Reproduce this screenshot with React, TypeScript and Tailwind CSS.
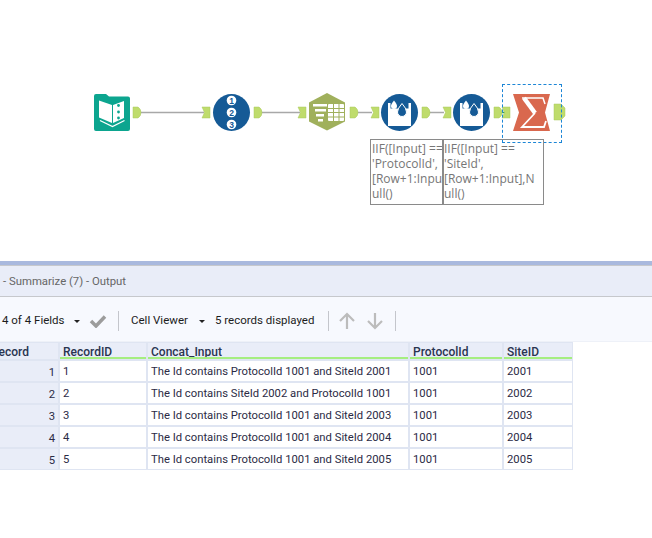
const rows = [
  ['1', 'The Id contains ProtocolId 1001 and SiteId 2001', '1001', '2001'],
  ['2', 'The Id contains SiteId 2002 and ProtocolId 1001', '1001', '2002'],
  ['3', 'The Id contains ProtocolId 1001 and SiteId 2003', '1001', '2003'],
  ['4', 'The Id contains ProtocolId 1001 and SiteId 2004', '1001', '2004'],
  ['5', 'The Id contains ProtocolId 1001 and SiteId 2005', '1001', '2005'],
]

const outAnchor = (x: number) => (
  <path d={`M${x} 107h5q3 2 3 5.5t-3 5.5h-5z`} fill="#bfdc6c" stroke="#a9c95c" strokeWidth="0.5" />
)
const inAnchor = (x: number) => (
  <path d={`M${x} 107h8v11h-8l2.5-5.5z`} fill="#bfdc6c" stroke="#a9c95c" strokeWidth="0.5" />
)

function FormulaIcon({ cx }: { cx: number }) {
  const x = cx - 18.5
  return (
    <g transform={`translate(${x} 94)`}>
      <circle cx="18.5" cy="18.5" r="18.5" fill="#155a96" />
      <path d="M7 9h2.5v5.5h18V9H30v23H7z" fill="#fff" />
      <path d="M13 6.5q3 3.5 3 5.5a3 3 0 0 1-6 0q0-2 3-5.5z" fill="#fff" />
      <path d="M21 9.5q4.5 5 4.5 8.5a4.5 4.5 0 0 1-9 0q0-3.5 4.5-8.5z" fill="#155a96" stroke="#fff" strokeWidth="1" />
    </g>
  )
}

function WorkflowDrawing() {
  return (
    <svg className="absolute inset-0" width="652" height="261" viewBox="0 0 652 261">
      {/* wires */}
      <g stroke="#a8a8a8" strokeWidth="1.5">
        <path d="M141 112.5H204" />
        <path d="M261 112.5H300" />
        <path d="M357 112.5H372" />
        <path d="M429 112.5H444" />
      </g>
      <path d="M501 112.5H506" stroke="#2f9e5f" strokeWidth="1.5" />

      {/* input data */}
      <path d="M94 96q0-2 2-2h10l3 2.5h19q2 0 2 2V129q0 2-2 2H96q-2 0-2-2z" fill="#0ca58f" />
      <path d="M99 100.5l13 4.5v18l-13-5.5z" fill="#fff" />
      <path d="M113 105l11-4v17l-11 5z" fill="#fff" />
      <circle cx="118.5" cy="105.5" r="1.4" fill="#0ca58f" />
      <circle cx="118.5" cy="112" r="1.4" fill="#0ca58f" />
      <circle cx="118.5" cy="118" r="1.4" fill="#0ca58f" />
      <path d="M100 120.5l12.5 6 12-6" fill="none" stroke="#fff" strokeWidth="1.3" />
      {outAnchor(133)}

      {/* record id */}
      {inAnchor(202)}
      <circle cx="231.5" cy="112.5" r="18.5" fill="#155a96" />
      {[100.5, 112.5, 124.5].map((cy, i) => (
        <g key={cy}>
          <circle cx="231.5" cy={cy} r="4.8" fill="#fff" />
          <text x="231.5" y={cy + 3} textAnchor="middle" fontSize="8.5" fontWeight="700" fill="#155a96" fontFamily="'Liberation Sans', sans-serif">
            {i + 1}
          </text>
        </g>
      ))}
      {outAnchor(254)}

      {/* cross tab */}
      {inAnchor(298)}
      <path d="M327 93l18 9.5v19L327 130.5 309 121.5v-19z" fill="#a0b05c" />
      <g fill="#fff">
        <rect x="313" y="104" width="14" height="2.5" />
        <rect x="315" y="109" width="11" height="2.5" />
        <rect x="316" y="114" width="8" height="2.5" />
        <rect x="318" y="119" width="5" height="2.5" />
        <rect x="328" y="104" width="16" height="17" rx="1" />
      </g>
      <g fill="#a0b05c">
        <rect x="333" y="104" width="1" height="17" />
        <rect x="338.5" y="104" width="1" height="17" />
        <rect x="328" y="108" width="16" height="1" />
        <rect x="328" y="112" width="16" height="1" />
        <rect x="328" y="116.5" width="16" height="1" />
      </g>
      {outAnchor(350)}

      {inAnchor(371)}
      <FormulaIcon cx={399.5} />
      {outAnchor(422)}

      {inAnchor(443)}
      <FormulaIcon cx={471.5} />
      {outAnchor(494)}

      {/* summarize */}
      {inAnchor(502)}
      <path d="M513 94h37l-5 18.5 5 18.5h-37l6-18.5z" fill="#d9684e" />
      <path d="M522 98h21l2 6" fill="none" stroke="#fff" strokeWidth="1.5" />
      <path d="M524 98l11 15" fill="none" stroke="#fff" strokeWidth="4.5" />
      <path d="M535 113L522 127h22l2-6" fill="none" stroke="#fff" strokeWidth="1.8" />
      <path d="M554 104h7l4 4v8l-4 4h-7z" fill="#bfdc6c" stroke="#a9c95c" strokeWidth="0.5" />
    </svg>
  )
}

function Annotation({ className, lines }: { className: string; lines: string[] }) {
  return (
    <div className={`absolute top-[139px] h-[66px] overflow-hidden border border-[#8a8a8a] pl-[1px] pt-[1px] font-['Open_Sans',sans-serif] text-[12px] leading-[15px] text-[#767676] ${className}`}>
      {lines.map((line) => (
        <div key={line} className="whitespace-nowrap">{line}</div>
      ))}
    </div>
  )
}

function Caret({ className }: { className: string }) {
  return <span className={`h-0 w-0 shrink-0 border-x-[3px] border-t-[3px] border-x-transparent border-t-[#222] ${className}`} />
}

function Separator({ className }: { className: string }) {
  return <span className={`h-[20px] w-[1px] shrink-0 bg-[#c4c6cc] ${className}`} />
}

export default function App() {
  const headCell = 'h-[16px] overflow-hidden whitespace-nowrap border-b-2 border-[#a5ee80] bg-[#e9edf8] pl-[3px] text-[12px] font-medium leading-[18px] text-[#2a3550]'
  const cell = 'h-[20px] overflow-hidden whitespace-nowrap bg-white pl-[3px] text-[11.25px] leading-[21px] text-[#2b2b45]'

  return (
    <div className="flex h-[538px] w-[652px] flex-col overflow-hidden bg-white font-['Roboto',sans-serif]">
      {/* workflow canvas */}
      <div className="relative h-[261px] shrink-0">
        <WorkflowDrawing />
        <div className="absolute left-[502px] top-[84px] h-[59px] w-[60px] border border-dashed border-[#1c86d6]" />
        <Annotation
          className="left-[370px] w-[74px]"
          lines={['IIF([Input] ==', "'ProtocolId',", '[Row+1:Input', 'ull()']}
        />
        <Annotation
          className="left-[442px] w-[102px]"
          lines={['IIF([Input] ==', "'SiteId',", '[Row+1:Input],N', 'ull()']}
        />
      </div>

      {/* results panel */}
      <div className="h-[4px] shrink-0 bg-[#a9b9de]" />
      <div className="flex h-[32px] shrink-0 items-center border-y border-[#c6c8cc] bg-[#e9edf8] pl-[3px] pt-[1px] text-[11.35px] text-[#666]">
        - Summarize (7) - Output
      </div>
      <div className="flex h-[45px] shrink-0 items-center whitespace-nowrap border-b border-[#eef1f8] bg-[#f7f9fe] pl-[2px] pt-[4px] text-[11.5px] text-[#1c1c1c]">
        <span className="w-[62px] shrink-0">4 of 4 Fields</span>
        <Caret className="ml-[10px]" />
        <svg className="ml-[9px] shrink-0" width="18" height="14" viewBox="0 0 18 14">
          <path d="M2 7l5 5L16 2.5" fill="none" stroke="#9c9c9c" strokeWidth="3.5" />
        </svg>
        <Separator className="ml-[11px]" />
        <span className="ml-[12px] w-[58px] shrink-0">Cell Viewer</span>
        <Caret className="ml-[10px]" />
        <span className="ml-[10px] w-[101px] shrink-0">5 records displayed</span>
        <Separator className="ml-[12px]" />
        <svg className="ml-[9px] shrink-0" width="18" height="18" viewBox="0 0 18 18">
          <path d="M2 9l7-7 7 7M9 2.5V17" fill="none" stroke="#bcbcbc" strokeWidth="2.2" />
        </svg>
        <svg className="ml-[10px] shrink-0" width="18" height="18" viewBox="0 0 18 18">
          <path d="M2 9l7 7 7-7M9 15.5V1" fill="none" stroke="#bcbcbc" strokeWidth="2.2" />
        </svg>
        <Separator className="ml-[11px]" />
      </div>

      {/* data grid */}
      <div className="grid w-[573px] grid-cols-[58px_86px_260px_92px_68px] gap-[2px] bg-[#dfe5f2] pb-[1px] pr-[1px] pt-[1px]">
        <div className="h-[16px] overflow-hidden whitespace-nowrap bg-[#e9edf8] text-[12px] font-medium leading-[18px] text-[#2a3550]">
          <span className="ml-[-9px]">Record</span>
        </div>
        <div className={headCell}>RecordID</div>
        <div className={headCell}>Concat_Input</div>
        <div className={headCell}>ProtocolId</div>
        <div className={headCell}>SiteID</div>
        {rows.map((row) => (
          <div key={row[0]} className="contents">
            <div className="h-[20px] overflow-hidden bg-[#e9edf8] pr-[3px] text-right text-[11.25px] leading-[23px] text-[#2b2b45]">{row[0]}</div>
            {row.map((value, i) => (
              <div key={i} className={cell}>{value}</div>
            ))}
          </div>
        ))}
      </div>
    </div>
  )
}
